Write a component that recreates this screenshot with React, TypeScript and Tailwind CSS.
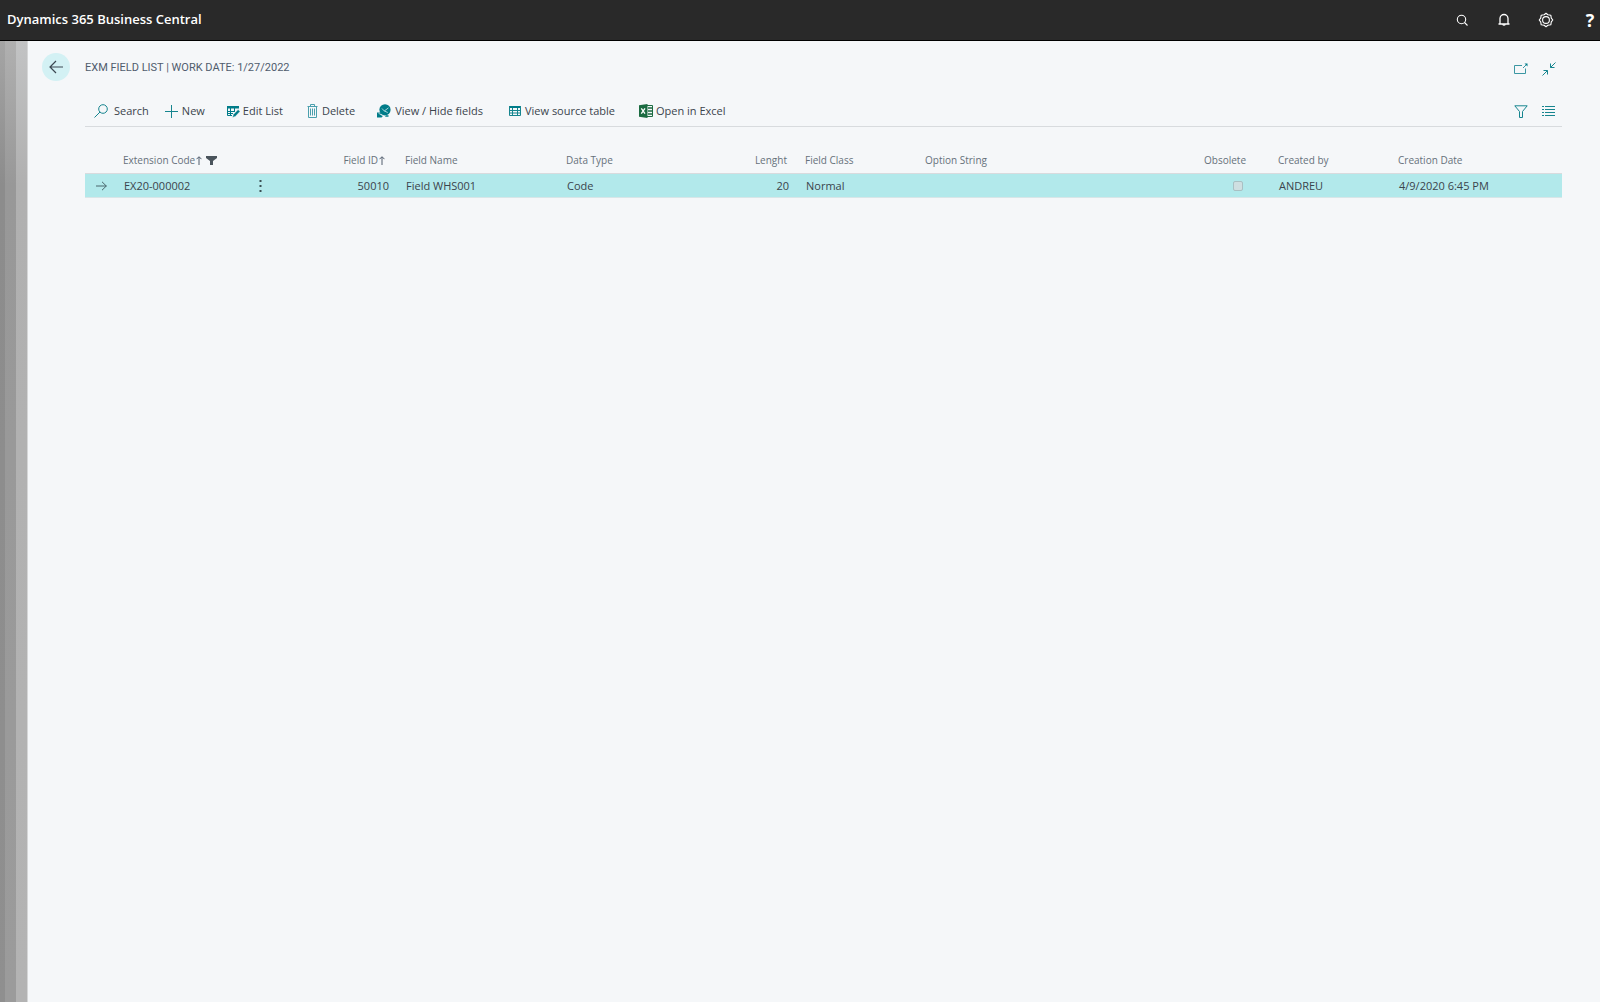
import React from 'react';

const topIcons = [
  { label: 'Search', icon: <SearchIcon /> },
  { label: 'Notifications', icon: <BellIcon /> },
  { label: 'Settings', icon: <GearIcon /> },
];

const actions = [
  { label: 'Search', icon: <LoupeIcon />, className: 'gap-[6px] mr-4' },
  { label: 'New', icon: <PlusIcon />, className: 'gap-1 mr-[22px]' },
  { label: 'Edit List', icon: <EditListIcon />, className: 'gap-[3px] mr-6' },
  { label: 'Delete', icon: <TrashIcon />, className: 'gap-1 mr-[22px]' },
  { label: 'View / Hide fields', icon: <ToggleFieldsIcon />, className: 'gap-1 mr-[26px]' },
  { label: 'View source table', icon: <TableIcon />, className: 'gap-1 mr-6' },
  { label: 'Open in Excel', icon: <ExcelIcon />, className: 'gap-[3px]' },
];

const rows = [
  {
    extension: 'EX20-000002',
    id: 50010,
    name: 'Field WHS001',
    type: 'Code',
    length: 20,
    fieldClass: 'Normal',
    options: '',
    obsolete: false,
    createdBy: 'ANDREU',
    createdAt: '4/9/2020 6:45 PM',
  },
];

function SearchIcon() {
  return (
    <svg className="w-4 h-4" viewBox="0 0 16 16" fill="none" stroke="currentColor" strokeWidth="1.1">
      <circle cx="7.5" cy="7.5" r="4.2" />
      <path d="m10.500 10.500 3 3" />
    </svg>
  );
}

function BellIcon() {
  return (
    <svg className="w-4 h-4" viewBox="0 0 16 16" fill="none" stroke="currentColor" strokeWidth="1.3">
      <path d="M4 12V6.5a4 4 0 0 1 8 0V12M2.5 12h11" />
      <path d="M6.7 12.3a1.4 1.4 0 0 0 2.6 0" />
    </svg>
  );
}

function GearIcon() {
  return (
    <svg className="w-4 h-4" viewBox="0 0 16 16" fill="none" stroke="currentColor" strokeWidth="1.1">
      <path d="M8 1.2 9.9 2.7 12.8 3.2 13.3 6.1 14.8 8 13.3 9.9 12.8 12.8 9.9 13.3 8 14.8 6.1 13.3 3.2 12.8 2.7 9.9 1.2 8 2.7 6.1 3.2 3.2 6.1 2.7Z" strokeLinejoin="round" />
      <circle cx="8" cy="8" r="3.4" />
    </svg>
  );
}

function LoupeIcon() {
  return (
    <svg className="w-[14px] h-[14px]" viewBox="0 0 14 14" fill="none" stroke="#16858f">
      <circle cx="9" cy="5" r="4.3" />
      <path d="M6 8 .5 13.5" />
    </svg>
  );
}

function PlusIcon() {
  return (
    <svg className="w-[13px] h-[13px]" viewBox="0 0 13 13" fill="none" stroke="#16858f">
      <path d="M6.5 0v13M0 6.5h13" />
    </svg>
  );
}

function EditListIcon() {
  return (
    <svg className="w-[13px] h-[13px]" viewBox="0 0 13 13">
      <path d="M0 1h12v2.5H0z" fill="#007c89" />
      <path d="M.5 2v8.500H5M0 6.500h8M0 8.500h6M3.500 3v7.500M7.500 3v4" fill="none" stroke="#007c89" />
      <path d="m5.500 12.500.800-3 4.800-5 2 2-4.800 5z" fill="#007c89" stroke="#f5f7f9" strokeWidth=".5" />
    </svg>
  );
}

function TrashIcon() {
  return (
    <svg className="w-[11px] h-[14px]" viewBox="0 0 11 14" fill="none" stroke="#4a9fad">
      <path d="M.5 2.500h10M3.500 2.500v-2h4v2M1.500 2.500v11h8v-11M3.500 4.500v7M5.500 4.500v7M7.500 4.500v7" />
    </svg>
  );
}

function ToggleFieldsIcon() {
  return (
    <svg className="w-[14px] h-[14px]" viewBox="0 0 14 14">
      <circle cx="8" cy="5.8" r="5.6" fill="#007c89" />
      <path d="M5 4.500 7.300 7 11.500 3.800M7.300 7l3.500 1.500" fill="none" stroke="#b5dbdf" strokeWidth=".9" />
      <path d="M0 8.500h4.500l-1 1.500 2.500 2-1.500 1.500H0z" fill="#007c89" />
      <path d="M1.500 9.200 6 12" stroke="#f5f7f9" strokeWidth=".7" />
      <path d="M9 11.200h2.500v1.500H8z" fill="#007c89" />
    </svg>
  );
}

function TableIcon() {
  return (
    <svg className="w-[12px] h-[12px]" viewBox="0 0 12 12">
      <path d="M0 1h12v2H0z" fill="#007c89" />
      <path d="M.5 1v9.500h11V1M0 5.500h12M0 8h12M3.500 3v7.500M8.500 3v7.500" fill="none" stroke="#16858f" />
    </svg>
  );
}

function ExcelIcon() {
  return (
    <svg className="w-[14px] h-[14px]" viewBox="0 0 14 14">
      <path d="M7 1.500h6.500v11H7" fill="#f5f7f9" stroke="#1b6b41" />
      <path d="M9 4h4M9 7h4M9 10h4" stroke="#1b6b41" strokeWidth="1.500" />
      <path d="M0 1.200 8.500 0v14L0 12.800z" fill="#1b6b41" />
      <path d="M2.300 4.300 6 9.700M6 4.300 2.300 9.700" stroke="#fff" strokeWidth="1.300" />
    </svg>
  );
}

function PopOutIcon() {
  return (
    <svg className="w-[14px] h-[12px]" viewBox="0 0 14 12" fill="none" stroke="#3b97a3">
      <path d="M8 2.500H.5v8h11V5.500" />
      <path d="m9 5 4-4" />
      <path d="M10.500.5h3v3z" fill="#007c89" stroke="none" />
    </svg>
  );
}

function CollapseIcon() {
  return (
    <svg className="w-[14px] h-[14px]" viewBox="0 0 14 14" fill="none" stroke="#16858f">
      <path d="M13.500.5 8.500 5.500M8.500 1.500v4h4M.5 13.500l5-5M1.500 8.500h4v4" />
    </svg>
  );
}

function FunnelIcon() {
  return (
    <svg className="w-[14px] h-[13px]" viewBox="0 0 14 13" fill="none" stroke="#16858f">
      <path d="M.8.800h12.400L8.500 6.500v6h-3v-6z" />
    </svg>
  );
}

function ListIcon() {
  return (
    <svg className="w-[13px] h-[10px]" viewBox="0 0 13 10" fill="none" stroke="#16858f">
      <path d="M0 .5h2M3 .5h10M0 3.500h2M3 3.500h10M0 6.500h2M3 6.500h10M0 9.500h2M3 9.500h10" />
    </svg>
  );
}

function SortIcon() {
  return (
    <svg className="w-[6px] h-[9px]" viewBox="0 0 6 9" fill="none" stroke="#505c6d">
      <path d="M3 9V1M.5 3.200 3 .7l2.500 2.500" />
    </svg>
  );
}

const App = () => {
  return (
    <div className="min-h-screen flex flex-col bg-[#f5f7f9] text-[#3b444c] font-['Open_Sans','Noto_Sans',sans-serif]">
      <header className="h-[41px] shrink-0 flex items-center justify-between pl-[7px] pr-[2px] bg-[#292929] border-b border-black text-white">
        <a href="#" className="text-[13px] font-semibold">Dynamics 365 Business Central</a>
        <div className="flex items-center">
          {topIcons.map((item) => (
            <button key={item.label} aria-label={item.label} className="mr-[26px]">
              {item.icon}
            </button>
          ))}
          <button aria-label="Help" className="w-4 ml-[2px] text-lg leading-5 font-bold">?</button>
        </div>
      </header>

      <div className="flex-1 flex">
        <div className="w-7 shrink-0 flex">
          <div className="w-[5px] bg-linear-to-b from-[#a5a5a5] via-[#8c8c8c] via-15% to-[#8f8f8f]" />
          <div className="w-[11px] bg-linear-to-b from-[#b0b0b0] via-[#989898] via-15% to-[#9b9b9b]" />
          <div className="w-[11px] bg-linear-to-b from-[#c2c3c4] via-[#b0b0b0] via-15% to-[#b3b3b3]" />
          <div className="w-px bg-[#d5d6d7]" />
        </div>

        <main className="flex-1 pl-[14px] pr-[38px] pt-3">
          <div className="flex items-center h-7">
            <button aria-label="Back" className="w-7 h-7 mr-[15px] rounded-full bg-[#d3f1f4] flex items-center justify-center">
              <svg className="w-[14px] h-[14px]" viewBox="0 0 14 14" fill="none" stroke="#3c4852" strokeWidth="1.200">
                <path d="M14 7H1M7 1 1 7l6 6" />
              </svg>
            </button>
            <h1 className="pt-[3px] text-[11px] text-[#505c6d] font-['Roboto',sans-serif]">EXM FIELD LIST | WORK DATE: 1/27/2022</h1>
            <div className="ml-auto pt-[3px] pr-[6px] flex items-center gap-[14px]">
              <button aria-label="Open in new window"><PopOutIcon /></button>
              <button aria-label="Collapse"><CollapseIcon /></button>
            </div>
          </div>

          <div className="ml-[43px]">
            <div className="mt-[14px] h-8 pt-px pl-[9px] flex items-center border-b border-[#d8dbde]">
              {actions.map((action) => (
                <button key={action.label} className={`flex items-center text-[11px] whitespace-nowrap ${action.className}`}>
                  {action.icon}
                  {action.label}
                </button>
              ))}
              <div className="ml-auto pr-[7px] flex items-center gap-[14px]">
                <button aria-label="Filter"><FunnelIcon /></button>
                <button aria-label="Show as list"><ListIcon /></button>
              </div>
            </div>

            <table className="mt-5 w-full table-fixed text-left">
              <colgroup>
                <col className="w-[30px]" />
                <col className="w-[135px]" />
                <col className="w-5" />
                <col className="w-[127px]" />
                <col className="w-[161px]" />
                <col className="w-[161px]" />
                <col className="w-[78px]" />
                <col className="w-[120px]" />
                <col className="w-[233px]" />
                <col className="w-[120px]" />
                <col className="w-[120px]" />
                <col />
              </colgroup>
              <thead>
                <tr className="h-[26px] text-[10px] text-[#66717b] border-b border-[#d8dbde] [&>th]:font-normal [&>th]:px-2 [&>th]:pt-[2px] [&>th]:whitespace-nowrap">
                  <th />
                  <th>
                    <span className="flex items-center gap-px">
                      Extension Code
                      <SortIcon />
                      <svg className="w-[11px] h-[9px] ml-[3px]" viewBox="0 0 11 9" fill="#4a545c">
                        <path d="M0 0h11v2L7 5v4H4V5L0 2z" />
                      </svg>
                    </span>
                  </th>
                  <th />
                  <th>
                    <span className="flex items-center justify-end gap-px pr-1">
                      Field ID
                      <SortIcon />
                    </span>
                  </th>
                  <th>Field Name</th>
                  <th>Data Type</th>
                  <th className="text-right"><span className="pr-[2px]">Lenght</span></th>
                  <th>Field Class</th>
                  <th>Option String</th>
                  <th className="text-right"><span className="pr-4">Obsolete</span></th>
                  <th>Created by</th>
                  <th>Creation Date</th>
                </tr>
              </thead>
              <tbody>
                {rows.map((row) => (
                  <tr key={row.id} className="h-6 text-[11px] leading-4 bg-[#b2e9eb] border-b border-[#d8e6e8] [&>td]:pl-[9px] [&>td]:pr-2 [&>td]:pt-[2px] [&>td]:whitespace-nowrap">
                    <td>
                      <svg className="w-[11px] h-[10px] ml-[2px]" viewBox="0 0 11 10" fill="none" stroke="#4a666c">
                        <path d="M0 5h10.500M6 .8 10.300 5 6 9.200" />
                      </svg>
                    </td>
                    <td>{row.extension}</td>
                    <td>
                      <button aria-label="Show more options" className="block">
                        <svg className="w-[3px] h-3" viewBox="0 0 3 12" fill="#3b5054">
                          <path d="M.5 0h2v2h-2zM.5 5h2v2h-2zM.5 10h2v2h-2z" />
                        </svg>
                      </button>
                    </td>
                    <td className="text-right">{row.id}</td>
                    <td>{row.name}</td>
                    <td>{row.type}</td>
                    <td className="text-right">{row.length}</td>
                    <td>{row.fieldClass}</td>
                    <td>{row.options}</td>
                    <td>
                      <input
                        type="checkbox"
                        aria-label="Obsolete"
                        defaultChecked={row.obsolete}
                        className="block ml-auto mr-[19px] w-[10px] h-[10px] appearance-none rounded-xs border border-[#a9c0c3] bg-[#cfdfe1]"
                      />
                    </td>
                    <td>{row.createdBy}</td>
                    <td>{row.createdAt}</td>
                  </tr>
                ))}
              </tbody>
            </table>
          </div>
        </main>
      </div>
    </div>
  );
};

export default App;
